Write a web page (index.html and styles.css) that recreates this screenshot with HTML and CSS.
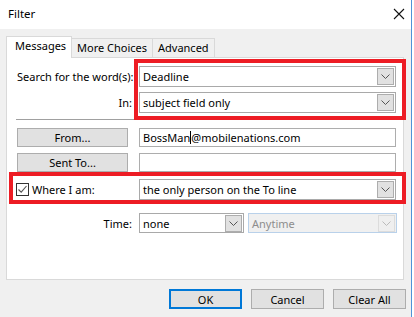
FILE: index.html
```html
<!DOCTYPE html>
<html lang="en">
<head>
    <meta charset="UTF-8">
    <title>Filter</title>
    <link rel="stylesheet" href="styles.css">
</head>
<body>

    <div class="window">
        <div class="titlebar">
            <span class="title">Filter</span>
            <svg class="close" width="12" height="12" viewBox="0 0 12 12">
                <path d="M1 1 L11 11 M11 1 L1 11" stroke="#111" stroke-width="1.1" fill="none"/>
            </svg>
        </div>

        <div class="dialog">
            <div class="tabs">
                <div class="tab active">Messages</div>
                <div class="tab">More Choices</div>
                <div class="tab">Advanced</div>
            </div>

            <div class="panel">
                <div class="row row-search">
                    <label class="label">Search for the word(s):</label>
                    <div class="combo">
                        <span class="value">Deadline</span>
                        <span class="drop"><svg width="9" height="5" viewBox="0 0 9 5"><path d="M0.5 0.5 L4.5 4.5 L8.5 0.5" stroke="#555" fill="none"/></svg></span>
                    </div>
                </div>
                <div class="row row-in">
                    <label class="label">In:</label>
                    <div class="combo">
                        <span class="value">subject field only</span>
                        <span class="drop"><svg width="9" height="5" viewBox="0 0 9 5"><path d="M0.5 0.5 L4.5 4.5 L8.5 0.5" stroke="#555" fill="none"/></svg></span>
                    </div>
                </div>

                <div class="separator"></div>

                <div class="row row-from">
                    <button class="btn btn-side">From...</button>
                    <div class="field"><span class="value">BossMan<span class="caret"></span>@mobilenations.com</span></div>
                </div>
                <div class="row row-sent">
                    <button class="btn btn-side">Sent To...</button>
                    <div class="field"></div>
                </div>
                <div class="row row-where">
                    <label class="check">
                        <span class="box"><svg width="11" height="11" viewBox="0 0 11 11"><path d="M1.5 5.5 L4.2 8.2 L9.5 2" stroke="#555" stroke-width="1.1" fill="none"/></svg></span>
                        Where I am:
                    </label>
                    <div class="combo">
                        <span class="value">the only person on the To line</span>
                        <span class="drop"><svg width="9" height="5" viewBox="0 0 9 5"><path d="M0.5 0.5 L4.5 4.5 L8.5 0.5" stroke="#555" fill="none"/></svg></span>
                    </div>
                </div>
                <div class="row row-time">
                    <label class="label">Time:</label>
                    <div class="time-controls">
                        <div class="combo combo-short">
                            <span class="value">none</span>
                            <span class="drop"><svg width="9" height="5" viewBox="0 0 9 5"><path d="M0.5 0.5 L4.5 4.5 L8.5 0.5" stroke="#555" fill="none"/></svg></span>
                        </div>
                        <div class="combo combo-disabled">
                            <span class="value">Anytime</span>
                            <span class="drop"><svg width="9" height="5" viewBox="0 0 9 5"><path d="M0.5 0.5 L4.5 4.5 L8.5 0.5" stroke="#bbb" fill="none"/></svg></span>
                        </div>
                    </div>
                </div>
            </div>

            <div class="actions">
                <button class="btn btn-default">OK</button>
                <button class="btn">Cancel</button>
                <button class="btn">Clear All</button>
            </div>
        </div>

        <!-- highlight boxes drawn over the dialog -->
        <div class="mark mark-search"></div>
        <div class="mark mark-where"></div>
    </div>

</body>
</html>
```

FILE: styles.css
```css
* {
    margin: 0;
    padding: 0;
    box-sizing: border-box;
}

body {
    background-color: #fff;
    font-family: 'Segoe UI', 'Noto Sans', sans-serif;
    font-size: 11px;
    color: #000;
    width: 414px;
    height: 317px;
    overflow: hidden;
    white-space: nowrap;
}

.window {
    position: relative;
    width: 412px;
    height: 317px;
    border-right: 1px solid #4f93d8;
    display: flex;
    flex-direction: column;
}

.titlebar {
    height: 29px;
    flex-shrink: 0;
    background-color: #fff;
    display: flex;
    align-items: center;
    justify-content: space-between;
    padding: 0 6px 2px 8px;
}

.title {
    font-size: 11.5px;
}

.close {
    margin-top: 1px;
}

.dialog {
    flex: 1;
    background-color: #f0f0f0;
    padding: 7px 0 0 6px;
}

.tabs {
    display: flex;
    align-items: flex-end;
    height: 21px;
    position: relative;
    z-index: 1;
}

.tab {
    height: 19px;
    padding: 0 5px;
    border: 1px solid #d9d9d9;
    border-bottom: none;
    border-left: none;
    background-color: #f0f0f0;
    line-height: 18px;
}

.tab.active {
    height: 22px;
    margin-bottom: -1px;
    padding: 0 8px;
    border-left: 1px solid #d9d9d9;
    background-color: #fff;
    line-height: 18px;
    width: 66px;
}

.panel {
    width: 398px;
    height: 223px;
    background-color: #fff;
    border: 1px solid #d9d9d9;
    padding: 8px 7px 0 10px;
}

.row {
    display: flex;
    align-items: center;
}

.label {
    width: 115px;
    flex-shrink: 0;
    text-align: right;
}

.row > .combo,
.row > .field,
.time-controls {
    margin-left: 7px;
}

.combo,
.field {
    width: 257px;
    height: 21px;
    flex-shrink: 0;
    border: 1px solid #a9a9a9;
    background-color: #fff;
    display: flex;
    align-items: center;
    justify-content: space-between;
    padding-left: 3px;
}

.field {
    height: 19px;
    border-color: #adadad;
}

.caret {
    display: inline-block;
    width: 1px;
    height: 13px;
    background-color: #000;
    vertical-align: -2px;
}

.drop {
    width: 17px;
    height: 17px;
    margin-right: 1px;
    background-color: #e1e1e1;
    border: 1px solid #adadad;
    display: flex;
    align-items: center;
    justify-content: center;
}

.row-in {
    margin-top: 5px;
}

.separator {
    height: 1px;
    background-color: #a0a0a0;
    margin: 6px 0 8px -1px;
    width: 380px;
}

.btn {
    font-family: inherit;
    font-size: 11px;
    color: #000;
    background-color: #e1e1e1;
    border: 1px solid #adadad;
    height: 19px;
    line-height: 15px;
}

.btn-side {
    width: 111px;
    flex-shrink: 0;
    margin-right: 4px;
}

.row-sent {
    margin-top: 6px;
}

.row-where {
    margin-top: 7px;
}

.check {
    width: 116px;
    flex-shrink: 0;
    display: flex;
    align-items: center;
    margin-left: -1px;
}

.box {
    width: 13px;
    height: 13px;
    border: 1px solid #333;
    margin-right: 3px;
    display: flex;
    align-items: center;
    justify-content: center;
}

.row-time {
    margin-top: 13px;
}

.time-controls {
    display: flex;
    gap: 4px;
}

.combo-short {
    width: 105px;
    height: 20px;
}

.combo-disabled {
    width: 149px;
    height: 20px;
    border-color: #b9d1ea;
    background-color: #f0f0f0;
    color: #8d8d8d;
}

.combo-disabled .drop {
    border-color: #dcdcdc;
    background-color: #efefef;
}

.actions {
    display: flex;
    justify-content: flex-end;
    gap: 9px;
    padding: 9px 5px 0 0;
}

.actions .btn {
    width: 73px;
    height: 20px;
}

.btn-default {
    border: 2px solid #0078d7;
}

.mark {
    position: absolute;
    border: 4px solid #ed1c24;
}

.mark-search {
    left: 134px;
    top: 59px;
    width: 272px;
    height: 61px;
}

.mark-where {
    left: 9px;
    top: 172px;
    width: 397px;
    height: 32px;
}
```
